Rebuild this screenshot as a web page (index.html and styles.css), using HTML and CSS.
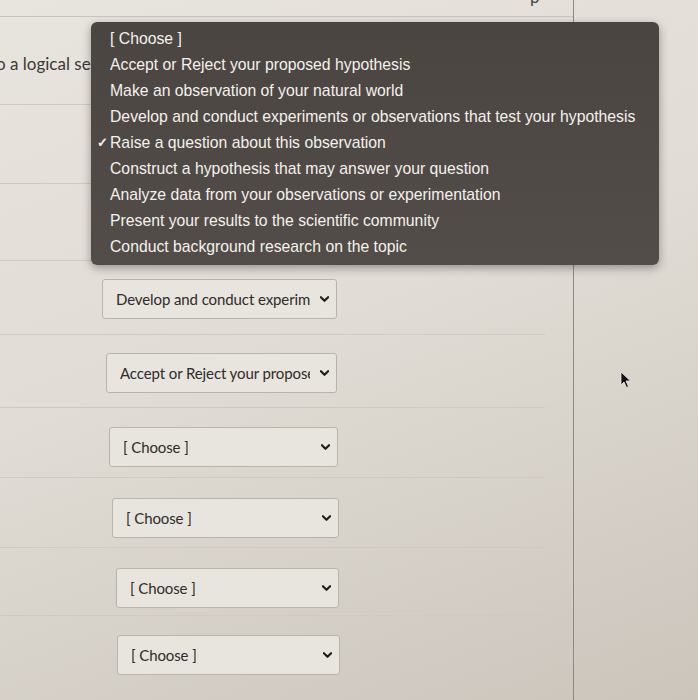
FILE: index.html
```html
<!DOCTYPE html>
<html>
<head>
<meta charset="utf-8">
<link rel="stylesheet" href="styles.css">
</head>
<body>
<div class="screen">
  <div class="page">
    <div class="topbar"><span class="topmark">p</span></div>
    <div class="qrow q1"><p class="qtext">to a logical sequence of steps</p></div>
    <div class="qrow q2"></div>
    <div class="qrow q3"></div>
    <div class="srow s1"><div class="sel"><span class="val">Develop and conduct experiments or observations</span><svg class="chev" viewBox="0 0 10 6"><path d="M1 1 L5 5 L9 1"/></svg></div></div>
    <div class="srow s2"><div class="sel"><span class="val">Accept or Reject your proposed hypothesis</span><svg class="chev" viewBox="0 0 10 6"><path d="M1 1 L5 5 L9 1"/></svg></div></div>
    <div class="srow s3"><div class="sel"><span class="val">[ Choose ]</span><svg class="chev" viewBox="0 0 10 6"><path d="M1 1 L5 5 L9 1"/></svg></div></div>
    <div class="srow s4"><div class="sel"><span class="val">[ Choose ]</span><svg class="chev" viewBox="0 0 10 6"><path d="M1 1 L5 5 L9 1"/></svg></div></div>
    <div class="srow s5"><div class="sel"><span class="val">[ Choose ]</span><svg class="chev" viewBox="0 0 10 6"><path d="M1 1 L5 5 L9 1"/></svg></div></div>
    <div class="srow s6 last"><div class="sel"><span class="val">[ Choose ]</span><svg class="chev" viewBox="0 0 10 6"><path d="M1 1 L5 5 L9 1"/></svg></div></div>
  </div>

  <ul class="menu">
    <li>[ Choose ]</li>
    <li>Accept or Reject your proposed hypothesis</li>
    <li>Make an observation of your natural world</li>
    <li>Develop and conduct experiments or observations that test your hypothesis</li>
    <li class="checked"><span class="check">✓</span>Raise a question about this observation</li>
    <li>Construct a hypothesis that may answer your question</li>
    <li>Analyze data from your observations or experimentation</li>
    <li>Present your results to the scientific community</li>
    <li>Conduct background research on the topic</li>
  </ul>

  <svg class="cursor" viewBox="0 0 12 18"><path d="M1 1 L1 14 L4 11 L6.5 16.5 L8.5 15.5 L6 10 L10.5 10 Z" fill="#111" stroke="#eee" stroke-width="0.8"/></svg>
</div>
</body>
</html>
```
FILE: styles.css
```css
html, body {
  margin: 0;
  padding: 0;
}
body {
  width: 698px;
  height: 700px;
  overflow: hidden;
  background: linear-gradient(160deg, #e8e4de 0%, #e1dcd5 45%, #cbc5bc 100%);
  font-family: Lato, "Liberation Sans", sans-serif;
}
.screen {
  position: relative;
  width: 698px;
  height: 700px;
  overflow: hidden;
}
.page {
  width: 573px;
  height: 700px;
  border-right: 1px solid #8e8981;
  display: flex;
  flex-direction: column;
}
.topbar {
  height: 16px;
  border-bottom: 1px solid #c9c3bb;
  position: relative;
}
.topmark {
  position: absolute;
  left: 530px;
  top: -14px;
  font-size: 17px;
  color: #444;
}
.qrow {
  border-bottom: 1px solid #cfc9c1;
  box-sizing: border-box;
}
.q1 { height: 88px; display: flex; align-items: center; }
.q2 { height: 79px; }
.q3 { height: 77px; margin-right: 28px; }
.qtext {
  margin: 0 0 0 -10px;
  font-size: 17px;
  color: #3d3935;
  white-space: nowrap;
  padding-top: 6px;
}
.srow {
  border-bottom: 1px solid #cfc9c1;
  box-sizing: border-box;
  padding-top: 18px;
  margin-right: 28px;
}
.s1 { height: 74px; padding-left: 102px; }
.s2 { height: 73px; padding-left: 106px; }
.s3 { height: 70px; padding-left: 109px; padding-top: 19px; }
.s4 { height: 70px; padding-left: 112px; padding-top: 20px; }
.s5 { height: 68px; padding-left: 116px; padding-top: 20px; }
.s6 { flex: 1; padding-left: 117px; border-bottom: none; padding-top: 19px; }
.sel {
  box-sizing: border-box;
  height: 40px;
  width: 235px;
  border: 1px solid #b9b3ab;
  border-radius: 3px;
  background: #e8e4de;
  display: flex;
  align-items: center;
  padding-left: 13px;
  padding-right: 7px;
}
.s2 .sel { width: 231px; }
.s3 .sel { width: 229px; }
.s4 .sel { width: 227px; }
.s5 .sel { width: 223px; }
.s6 .sel { width: 223px; }
.val {
  flex: 1;
  overflow: hidden;
  white-space: nowrap;
  font-size: 15px;
  letter-spacing: -0.1px;
  color: #2f2c29;
  margin-right: 10px;
}
.chev {
  width: 9px;
  height: 6px;
  fill: none;
  stroke: #1f1d1b;
  stroke-width: 2.4;
  stroke-linecap: round;
  stroke-linejoin: round;
}
.menu {
  position: absolute;
  left: 91px;
  top: 22px;
  width: 568px;
  height: 243px;
  box-sizing: border-box;
  margin: 0;
  padding: 4px 0 0 19px;
  list-style: none;
  background: linear-gradient(180deg, #4a4541 0%, #524d48 100%);
  border-radius: 6px;
  box-shadow: 0 3px 10px rgba(0, 0, 0, 0.35);
  font-family: "Liberation Sans", Arial, sans-serif;
  font-size: 15.75px;
  color: #f4f1ec;
}
.menu li {
  height: 26px;
  line-height: 26px;
  white-space: nowrap;
  position: relative;
}
.check {
  position: absolute;
  left: -13px;
  font-size: 13px;
  font-weight: bold;
}
.cursor {
  position: absolute;
  left: 620px;
  top: 371px;
  width: 12px;
  height: 18px;
}
```
